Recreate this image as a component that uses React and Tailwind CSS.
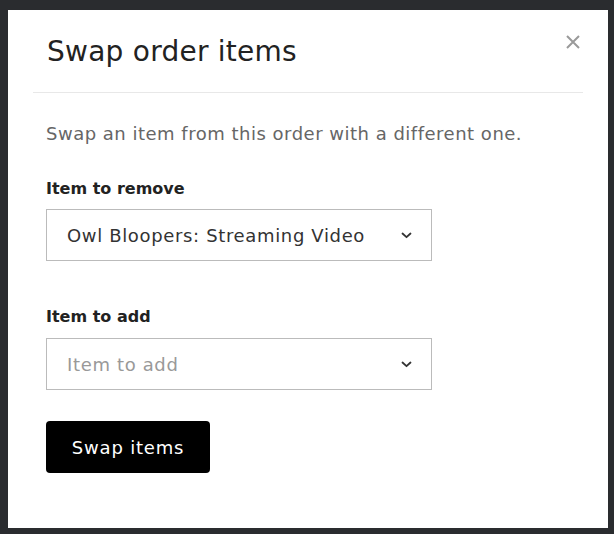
import React from "react";

function Chevron() {
  return (
    <svg width="11" height="7" viewBox="0 0 11 7" fill="none">
      <path d="M1.5 1.5 L5.5 5.2 L9.5 1.5" stroke="#333" strokeWidth="1.8" strokeLinecap="round" strokeLinejoin="round" />
    </svg>
  );
}

export default function App() {
  return (
    <div className="w-[614px] h-[534px] bg-[#2a2c2f] pt-[10px] pl-[8px] overflow-hidden" style={{ fontFamily: '"DejaVu Sans", sans-serif' }}>
      <div className="w-[600px] h-[518px] bg-white relative">
        <div className="mx-[25px] border-b border-[#e8e8e8] h-[83px] pl-[14px] pt-[25px]">
          <h1 className="text-[28px] leading-[34px] text-[#222] font-normal tracking-[0.25px]">Swap order items</h1>
        </div>
        <button className="absolute right-[28px] top-[25px] flex items-center justify-center">
          <svg width="14" height="14" viewBox="0 0 14 14">
            <path d="M1 1 L13 13 M13 1 L1 13" stroke="#9a9a9a" strokeWidth="2" />
          </svg>
        </button>
        <div className="pl-[38px] pt-[28px]">
          <p className="text-[18px] leading-[26px] text-[#666] tracking-[0.5px]">Swap an item from this order with a different one.</p>
          <div className="mt-[30px] text-[16px] leading-[24px] font-semibold text-[#222]">Item to remove</div>
          <div className="mt-[8px] w-[386px] h-[52px] border border-[#bbb] flex items-center justify-between pl-[20px] pr-[19px]">
            <span className="text-[18px] text-[#333] tracking-[0.65px]">Owl Bloopers: Streaming Video</span>
            <Chevron />
          </div>
          <div className="mt-[44px] text-[16px] leading-[24px] font-semibold text-[#222]">Item to add</div>
          <div className="mt-[9px] w-[386px] h-[52px] border border-[#bbb] flex items-center justify-between pl-[20px] pr-[19px]">
            <span className="text-[18px] text-[#999] tracking-[0.65px]">Item to add</span>
            <Chevron />
          </div>
          <button className="mt-[31px] w-[164px] h-[52px] bg-black text-white rounded-[4px] text-[18px] tracking-[0.8px]">Swap items</button>
        </div>
      </div>
    </div>
  );
}
